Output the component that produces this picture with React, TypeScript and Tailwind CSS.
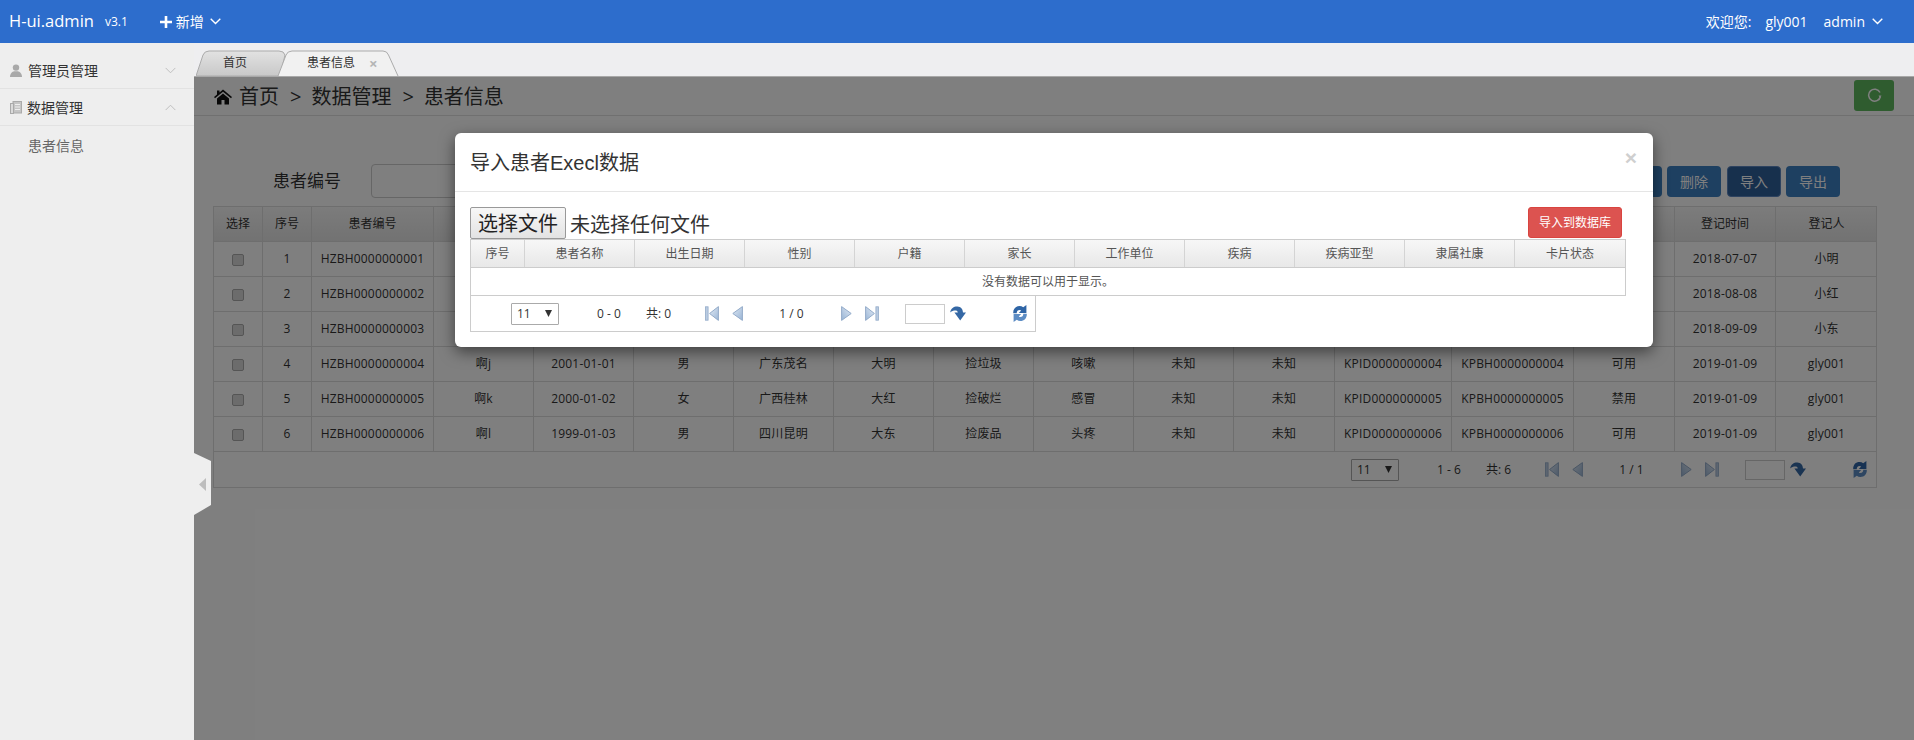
const FONT = "font-['Open_Sans','Noto_Sans_CJK_SC',sans-serif]";

function PagerFirst({ flip = false }: { flip?: boolean }) {
  return (
    <svg width="14" height="15" viewBox="0 0 14 15" className={flip ? "-scale-x-100" : ""}>
      <defs>
        <linearGradient id="pf" x1="0" y1="0" x2="1" y2="1">
          <stop offset="0" stopColor="#e3ebf5" />
          <stop offset="1" stopColor="#9bb6d6" />
        </linearGradient>
      </defs>
      <rect x="0.5" y="0.8" width="2.6" height="13.4" fill="#b9cbe1" stroke="#93abc9" strokeWidth="0.8" />
      <path d="M13.4 0.6V14.4L4.6 7.5Z" fill="url(#pf)" stroke="#93abc9" strokeWidth="1" />
    </svg>
  );
}

function PagerPrev({ flip = false }: { flip?: boolean }) {
  return (
    <svg width="11" height="15" viewBox="0 0 11 15" className={flip ? "-scale-x-100" : ""}>
      <defs>
        <linearGradient id="pp" x1="0" y1="0" x2="1" y2="1">
          <stop offset="0" stopColor="#dfe8f3" />
          <stop offset="1" stopColor="#98b4d5" />
        </linearGradient>
      </defs>
      <path d="M10.4 0.6V14.4L0.8 7.5Z" fill="url(#pp)" stroke="#93abc9" strokeWidth="1" />
    </svg>
  );
}

function GoIcon() {
  return (
    <svg width="16" height="15" viewBox="0 0 16 15">
      <path d="M0.2 6.5C0.8 2.2 4.2 0.4 7.4 0.6C10.8 0.8 12.8 3.2 13 6.4H16L10.2 14.6L4.4 6.4H7.8C7.6 5.2 6.6 4.6 5.4 4.6C3.4 4.6 1.8 5.2 0.2 6.5Z" fill="#3568a5" />
    </svg>
  );
}

function RefreshIcon() {
  return (
    <svg width="14" height="17" viewBox="0 0 14 17">
      <path d="M0.2 8.2C0 3.6 2.8 1 6.6 1C8 1 9.2 1.4 10.2 2.2L13.4 0V8H5.8L8.2 5.6C7.8 5.2 7.2 5 6.6 5C4.6 5 3.6 6.4 3.8 8.2Z" fill="#2f65a6" />
      <path d="M13.8 8.8C14 13.4 11.2 16 7.4 16C6 16 4.8 15.6 3.8 14.8L0.6 17V9H8.2L5.8 11.4C6.2 11.8 6.8 12 7.4 12C9.4 12 10.4 10.6 10.2 8.8Z" fill="#5c8cc4" />
    </svg>
  );
}

function Pager({ range, total, page }: { range: string; total: string; page: string }) {
  return (
    <div className="flex items-center h-full text-[12px] text-[#333]">
      <div className="ml-[40px] w-[48px] h-[22px] border border-[#aaa] flex items-center justify-between pl-[5px] pr-[6px] bg-white rounded-[1px]">
        <span>11</span>
        <svg width="7" height="7" viewBox="0 0 7 7"><path d="M0 0H7L3.5 7Z" fill="#333" /></svg>
      </div>
      <span className="ml-[38px] w-[26px] whitespace-nowrap">{range}</span>
      <span className="ml-[23px] w-[26px] whitespace-nowrap">{total}</span>
      <span className="ml-[33px] flex"><PagerFirst /></span>
      <span className="ml-[13px] flex"><PagerPrev /></span>
      <span className="ml-[36px] w-[25px] text-center whitespace-nowrap">{page}</span>
      <span className="ml-[37px] flex"><PagerPrev flip /></span>
      <span className="ml-[13px] flex"><PagerFirst flip /></span>
      <div className="ml-[26px] w-[40px] h-[20px] border border-[#ccc] bg-white" />
      <span className="ml-[5px] flex"><GoIcon /></span>
      <span className="ml-[47px] flex"><RefreshIcon /></span>
    </div>
  );
}

const mainCols = [49, 49, 122, 100, 100, 100, 100, 100, 100, 100, 100, 101, 117, 122, 101, 101, 101];
const mainHead = ["选择", "序号", "患者编号", "", "", "", "", "", "", "", "", "", "", "", "", "登记时间", "登记人"];
const rows = [
  ["", "1", "HZBH0000000001", "", "", "", "", "", "", "", "", "", "", "", "", "2018-07-07", "小明"],
  ["", "2", "HZBH0000000002", "", "", "", "", "", "", "", "", "", "", "", "", "2018-08-08", "小红"],
  ["", "3", "HZBH0000000003", "", "", "", "", "", "", "", "", "", "", "", "", "2018-09-09", "小东"],
  ["", "4", "HZBH0000000004", "啊j", "2001-01-01", "男", "广东茂名", "大明", "捡垃圾", "咳嗽", "未知", "未知", "KPID0000000004", "KPBH0000000004", "可用", "2019-01-09", "gly001"],
  ["", "5", "HZBH0000000005", "啊k", "2000-01-02", "女", "广西桂林", "大红", "捡破烂", "感冒", "未知", "未知", "KPID0000000005", "KPBH0000000005", "禁用", "2019-01-09", "gly001"],
  ["", "6", "HZBH0000000006", "啊l", "1999-01-03", "男", "四川昆明", "大东", "捡废品", "头疼", "未知", "未知", "KPID0000000006", "KPBH0000000006", "可用", "2019-01-09", "gly001"],
];
const modalCols = [54, 110, 110, 110, 110, 110, 110, 110, 110, 110, 110];
const modalHead = ["序号", "患者名称", "出生日期", "性别", "户籍", "家长", "工作单位", "疾病", "疾病亚型", "隶属社康", "卡片状态"];

function Btn({ label, dark = false }: { label: string; dark?: boolean }) {
  return (
    <div className={`w-[54px] h-[31px] rounded-[4px] flex items-center justify-center text-[14px] text-white ${dark ? "ml-[1px] bg-[#2f609b] border border-[#5d86c0]" : "bg-[#3c80c2]"}`}>
      {label}
    </div>
  );
}

export default function App() {
  return (
    <div className={`${FONT} h-[740px] w-[1914px] overflow-hidden flex flex-col bg-white text-[#333]`}>
      <header className="h-[43px] shrink-0 bg-[#2d6dcc] text-white flex items-center relative">
        <span className="ml-[9px] text-[16.5px] leading-none">H-ui.admin</span>
        <span className="ml-[11px] text-[12px] leading-none">v3.1</span>
        <svg className="ml-[32px]" width="12" height="12" viewBox="0 0 12 12"><path d="M6 0V12M0 6H12" stroke="#fff" strokeWidth="2.6" /></svg>
        <span className="ml-[4px] text-[14px] leading-none">新增</span>
        <svg className="ml-[6px]" width="11" height="7" viewBox="0 0 11 7" fill="none"><path d="M0.7 0.8L5.5 5.6L10.3 0.8" stroke="#fff" strokeWidth="1.4" /></svg>
        <div className="ml-auto flex items-center text-[14px] leading-none pr-[31px]">
          <span>欢迎您:</span>
          <span className="ml-[14px]">gly001</span>
          <span className="ml-[16px]">admin</span>
          <svg className="ml-[7px]" width="11" height="7" viewBox="0 0 11 7" fill="none"><path d="M0.7 0.8L5.5 5.6L10.3 0.8" stroke="#fff" strokeWidth="1.4" /></svg>
        </div>
      </header>

      <div className="flex-1 flex min-h-0">
        <aside className="w-[194px] shrink-0 bg-[#eeeeee] text-[14px]">
          <div className="h-[46px] border-b border-[#e2e2e2] flex items-center pl-[10px] pr-[18px] pt-[10px]">
            <svg width="12" height="13" viewBox="0 0 12 13"><circle cx="6" cy="3.6" r="3.2" fill="#a9a9a9" /><path d="M0 13C0 9.3 2.2 7.6 4.2 7.2H7.8C9.8 7.6 12 9.3 12 13Z" fill="#a9a9a9" /></svg>
            <span className="ml-[6px] text-[#333]">管理员管理</span>
            <svg className="ml-auto" width="11" height="7" viewBox="0 0 12 7" fill="none"><path d="M0.7 0.7L6 6L11.3 0.7" stroke="#bbb" /></svg>
          </div>
          <div className="h-[37px] border-b border-[#e2e2e2] flex items-center pl-[10px] pr-[18px]">
            <svg width="12" height="13" viewBox="0 0 12 13" fill="none"><rect x="3" y="0.5" width="8.5" height="11.5" fill="#c5c5c5" stroke="#aaa" /><rect x="0.5" y="2.5" width="3" height="10" fill="#dadada" stroke="#aaa" /><path d="M5 3.5H10M5 6H10M5 8.5H10" stroke="#eee" /></svg>
            <span className="ml-[5px] text-[#333]">数据管理</span>
            <svg className="ml-auto" width="11" height="7" viewBox="0 0 12 7" fill="none"><path d="M0.7 6.3L6 1L11.3 6.3" stroke="#bbb" /></svg>
          </div>
          <div className="pl-[28px] pt-[10px] text-[#666] leading-[20px]">患者信息</div>
        </aside>

        <main className="flex-1 min-w-0 flex flex-col relative">
          <div className="h-[34px] shrink-0 bg-[#eeeef0] flex items-end relative text-[12px] text-[#333] border-b border-[#a8a8a8]">
            <div className="relative w-[90px] h-[26px] ml-[2px] flex items-center justify-center">
              <svg className="absolute inset-0" width="90" height="26" viewBox="0 0 90 26">
                <defs>
                  <linearGradient id="t1" x1="0" y1="0" x2="0" y2="1"><stop offset="0" stopColor="#e2e2e2" /><stop offset="1" stopColor="#c8c8c8" /></linearGradient>
                </defs>
                <path d="M0 26L7 5Q8.5 1 13 1H83Q88 1 89 5L84 26Z" fill="url(#t1)" stroke="#ababab" />
              </svg>
              <span className="relative -ml-[12px]">首页</span>
            </div>
            <div className="relative w-[122px] h-[26px] -ml-[9px] flex items-center">
              <svg className="absolute inset-0" width="122" height="26" viewBox="0 0 122 26">
                <path d="M1 26L9 5Q10.5 1 15 1H106Q110 1 111.5 5L121 26" fill="#f1f1f1" stroke="#ababab" />
              </svg>
              <span className="relative ml-[30px]">患者信息</span>
              <span className="relative ml-[14px] text-[15px] leading-none font-bold text-[#b5b5b5]">×</span>
            </div>
          </div>

          <div className="h-[39px] shrink-0 border-b border-[#e0e0e0] flex items-center pl-[20px] pr-[20px] pt-[2px] text-[20px]">
            <svg width="18" height="16" viewBox="0 0 18 16"><path d="M9 0.5L18 8L17 9.3L9 2.8L1 9.3L0 8L3 5.5V1.5H5.5V3.5Z" fill="#111" /><path d="M3 9.5L9 4.5L15 9.5V15.5H10.5V11H7.5V15.5H3Z" fill="#111" /></svg>
            <span className="ml-[7px]">首页</span>
            <span className="ml-[11px]">&gt;</span>
            <span className="ml-[10px]">数据管理</span>
            <span className="ml-[11px]">&gt;</span>
            <span className="ml-[10px]">患者信息</span>
            <div className="ml-auto w-[40px] h-[31px] self-start mt-[1px] rounded-[3px] bg-[#5eb95e] flex items-center justify-center">
              <svg width="15" height="15" viewBox="0 0 15 15" fill="none"><path d="M13 4.5A6 6 0 1 0 13.5 8.5" stroke="#fff" strokeWidth="1.5" /><path d="M14.5 7.5H11.5L13 10Z" fill="#fff" /></svg>
            </div>
          </div>

          <div className="flex-1 pl-[19px] pr-[37px] pt-[48px]">
            <div className="flex items-center h-[34px] pl-[60px]">
              <span className="text-[17px] text-[#333]">患者编号</span>
              <div className="ml-[30px] w-[300px] h-[34px] border border-[#ccc] rounded-[4px]" />
              <div className="ml-auto flex gap-[5px] pr-[37px] items-center">
                <Btn label="查询" />
                <Btn label="删除" />
                <Btn label="导入" dark />
                <Btn label="导出" />
              </div>
            </div>

            <div className="mt-[8px] w-[1664px] border border-[#ddd] text-[12px]">
              <div className="flex h-[34px] bg-gradient-to-b from-[#f8f8f8] to-[#e5e5e5]">
                {mainCols.map((w, i) => (
                  <div key={i} style={{ width: w }} className="shrink-0 flex items-center justify-center border-r border-[#ddd] last:border-r-0">{mainHead[i]}</div>
                ))}
              </div>
              {rows.map((r, ri) => (
                <div key={ri} className="flex h-[35px] border-t border-[#ddd] tracking-[0.2px]">
                  {mainCols.map((w, i) => (
                    <div key={i} style={{ width: w }} className="shrink-0 flex items-center justify-center border-r border-[#ddd] last:border-r-0 whitespace-nowrap">
                      {i === 0 ? <div className="w-[12px] h-[12px] mt-[2px] rounded-[2px] border border-[#aaa] bg-[#d9d9d9]" /> : r[i]}
                    </div>
                  ))}
                </div>
              ))}
              <div className="h-[36px] border-t border-[#ddd] flex justify-end">
                <div className="w-[565px]">
                  <Pager range="1 - 6" total="共: 6" page="1 / 1" />
                </div>
              </div>
            </div>
          </div>

          <div className="absolute left-0 right-0 bottom-0 top-[34px] bg-black/50" />

          <div className="absolute left-0 top-[410px] w-[17px] h-[62px] bg-[#eeeeee] [clip-path:polygon(0_0,100%_13%,100%_84%,0_100%)] flex items-center pl-[5px]">
            <svg width="7" height="13" viewBox="0 0 7 13"><path d="M7 0V13L0 6.5Z" fill="#bdbdbd" /></svg>
          </div>

          <div className="absolute left-[261px] top-[90px] w-[1198px] h-[214px] bg-white rounded-[6px] shadow-[0_5px_15px_rgba(0,0,0,0.5)]">
            <div className="h-[59px] border-b border-[#e5e5e5] flex items-center pl-[15px] pr-[16px] pt-[2px]">
              <span className="text-[20px] font-['Liberation_Sans','Noto_Sans_CJK_SC',sans-serif]">导入患者Execl数据</span>
              <span className="ml-auto -mt-[12px] text-[21px] font-bold leading-none text-[#cfcfcf] font-['Liberation_Sans',sans-serif]">×</span>
            </div>
            <div className="pl-[15px] pr-[31px] pt-[15px]">
              <div className="flex items-end h-[32px]">
                <div className="w-[96px] h-[32px] pt-[1px] border border-[#999] rounded-[2px] bg-gradient-to-b from-[#f7f7f7] to-[#e3e3e3] flex items-center justify-center text-[20px] text-[#222] leading-none">选择文件</div>
                <span className="ml-[4px] text-[20px] leading-[28px] text-[#333]">未选择任何文件</span>
                <div className="ml-auto mb-[1px] w-[94px] h-[31px] rounded-[3px] bg-[#dc5350] border border-[#d9443f] flex items-center justify-center text-[12px] text-white">导入到数据库</div>
              </div>
              <div className="w-[1156px] border border-[#ccc] text-[12px] text-[#555]">
                <div className="flex h-[27px] bg-gradient-to-b from-[#f7f7f7] to-[#e8e8e8]">
                  {modalCols.map((w, i) => (
                    <div key={i} style={{ width: w }} className="shrink-0 flex items-center justify-center border-r border-[#d4d4d4] last:border-r-0">{modalHead[i]}</div>
                  ))}
                </div>
                <div className="h-[28px] border-t border-[#ccc] flex items-center justify-center">没有数据可以用于显示。</div>
              </div>
              <div className="w-[566px] h-[36px] border border-t-0 border-[#ccc]">
                <Pager range="0 - 0" total="共: 0" page="1 / 0" />
              </div>
            </div>
          </div>
        </main>
      </div>
    </div>
  );
}
